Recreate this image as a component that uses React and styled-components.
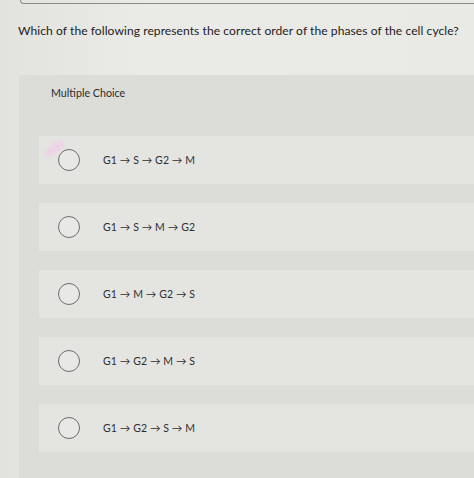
import React from "react";
import styled, { createGlobalStyle } from "styled-components";

const Global = createGlobalStyle`
  html, body { margin: 0; padding: 0; background: #e8e8e5; }
  body { font-family: "Lato", "Open Sans", sans-serif; color: #2a2a2a; overflow: hidden; }
`;

const Page = styled.div`
  width: 474px;
  height: 478px;
  display: flex;
  flex-direction: column;
  background: linear-gradient(90deg, #e2e2df 0%, #eaeae7 30%, #e9e9e6 100%);
`;

const TopBox = styled.div`
  height: 3px;
  margin-left: 20px;
  border-left: 1px solid #8a8a88;
  border-bottom: 1px solid #8a8a88;
  border-bottom-left-radius: 4px;
`;

const Question = styled.h1`
  margin: 18px 0 0 18px;
  font-size: 12.1px;
  font-weight: 400;
  line-height: 18px;
  letter-spacing: 0.05px;
  color: #222;
  white-space: nowrap;
`;

const Panel = styled.section`
  margin: 35px 0 0 19px;
  flex: 1;
  background: #dcdcd9;
  padding: 10px 0 0 20px;
  display: flex;
  flex-direction: column;
`;

const Label = styled.div`
  padding-left: 12px;
  font-size: 10.7px;
  line-height: 16px;
  color: #2c2c2c;
`;

const List = styled.div`
  margin-top: 35px;
  display: flex;
  flex-direction: column;
  gap: 19px;
`;

const Row = styled.div`
  position: relative;
  height: 48px;
  display: flex;
  align-items: center;
  padding-left: 19px;
  background: #e4e4e1;
`;

const Radio = styled.span`
  width: 22px;
  height: 22px;
  border-radius: 50%;
  border: 1px solid #6e6e6c;
  box-sizing: border-box;
  background: #e8e8e6;
  flex: none;
`;

const Glare = styled.span`
  position: absolute;
  left: 4px;
  top: 10px;
  width: 22px;
  height: 6px;
  border-radius: 3px;
  background: #f2c9ec;
  transform: rotate(-40deg);
  filter: blur(2px);
  opacity: 0.9;
`;

const OptionText = styled.span`
  margin-left: 23px;
  font-size: 10.5px;
  color: #303030;
  letter-spacing: 0.1px;
`;

const options = [
  "G1 → S → G2 → M",
  "G1 → S → M → G2",
  "G1 → M → G2 → S",
  "G1 → G2 → M → S",
  "G1 → G2 → S → M",
];

export default function App() {
  return (
    <>
      <Global />
      <Page>
        <TopBox />
        <Question>Which of the following represents the correct order of the phases of the cell cycle?</Question>
        <Panel>
          <Label>Multiple Choice</Label>
          <List>
            {options.map((o, i) => (
              <Row key={o}>
                {i === 0 && <Glare />}
                <Radio />
                <OptionText>{o}</OptionText>
              </Row>
            ))}
          </List>
        </Panel>
      </Page>
    </>
  );
}
